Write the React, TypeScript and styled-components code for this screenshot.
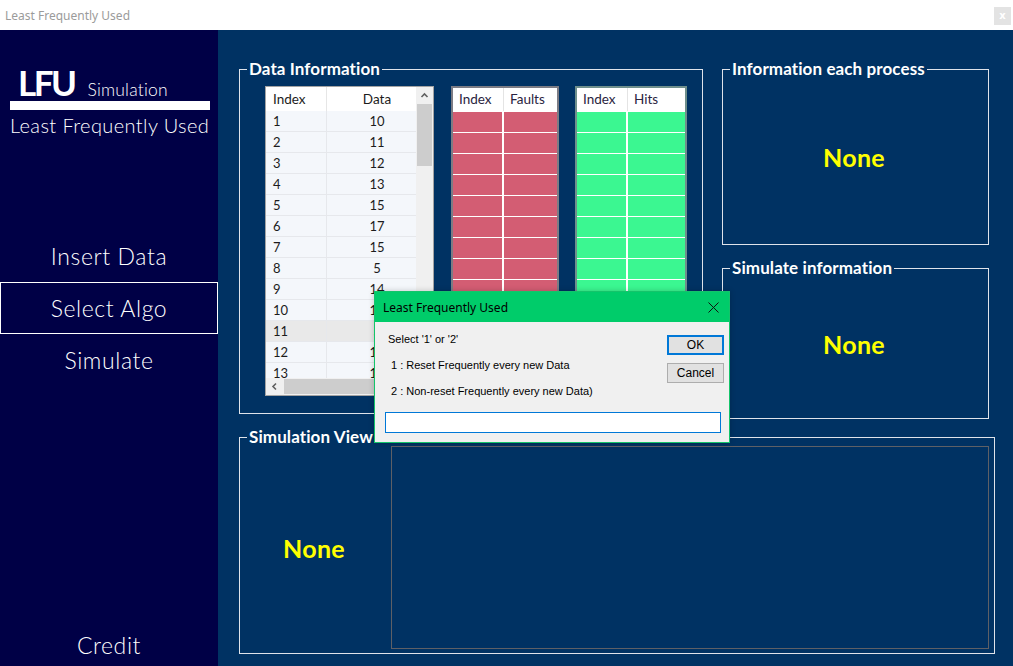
import React from 'react'
import styled, { createGlobalStyle } from 'styled-components'

const GlobalStyle = createGlobalStyle`
  html, body {
    margin: 0;
    padding: 0;
    overflow: hidden;
    background: #ffffff;
    font-family: Lato, "DejaVu Sans", sans-serif;
  }
  * { box-sizing: border-box; }
`

const MAIN_BG = '#003263'
const SIDE_BG = '#000046'

const dataRows = [10, 11, 12, 13, 15, 17, 15, 5, 14, 16, 5, 12, 10]

const Chevron = ({ dir }: { dir: 'up' | 'left' }) => (
  <svg width="9" height="9" viewBox="0 0 9 9">
    <path
      d={dir === 'up' ? 'M1.5 6 L4.5 3 L7.5 6' : 'M6 1.5 L3 4.5 L6 7.5'}
      fill="none"
      stroke="#606060"
      strokeWidth="1.6"
    />
  </svg>
)

const App = () => {
  return (
    <>
      <GlobalStyle />
      <Window>
        <TitleBar>
          <WindowTitle>Least Frequently Used</WindowTitle>
          <CloseBox>x</CloseBox>
        </TitleBar>
        <Body>
          <Sidebar>
            <LogoRow>
              <LogoMark>LFU</LogoMark>
              <LogoSmall>Simulation</LogoSmall>
            </LogoRow>
            <LogoBar />
            <LogoSubtitle>Least Frequently Used</LogoSubtitle>
            <Menu>
              <MenuItem>Insert Data</MenuItem>
              <MenuItem $active>Select Algo</MenuItem>
              <MenuItem>Simulate</MenuItem>
            </Menu>
            <CreditItem>Credit</CreditItem>
          </Sidebar>

          <Main>
            <TopRow>
              <Group $w={464} $h={345}>
                <Caption>Data Information</Caption>
                <Tables>
                  <DataGrid>
                    <GridView>
                      <HeaderRow>
                        <IndexCell>Index</IndexCell>
                        <ValueCell>Data</ValueCell>
                      </HeaderRow>
                      {dataRows.map((v, i) => (
                        <DataRow key={i} $selected={i === 10}>
                          <IndexCell>{i + 1}</IndexCell>
                          <ValueCell>{v}</ValueCell>
                        </DataRow>
                      ))}
                    </GridView>
                    <VScroll>
                      <ArrowBox><Chevron dir="up" /></ArrowBox>
                      <VThumb />
                    </VScroll>
                    <HScroll>
                      <ArrowBox><Chevron dir="left" /></ArrowBox>
                      <HThumb />
                    </HScroll>
                    <Corner />
                  </DataGrid>

                  <ColorGrid $w={108} $gap={17} $fill="#d35d73" $edge="#7c7c84" $first={52}>
                    <ColorHead>
                      <span>Index</span>
                      <span>Faults</span>
                    </ColorHead>
                    {Array.from({ length: 13 }).map((_, i) => (
                      <ColorRow key={i}>
                        <span />
                        <span />
                      </ColorRow>
                    ))}
                  </ColorGrid>

                  <ColorGrid $w={112} $gap={16} $fill="#3bf791" $edge="#6f8f8c" $first={52}>
                    <ColorHead>
                      <span>Index</span>
                      <span>Hits</span>
                    </ColorHead>
                    {Array.from({ length: 13 }).map((_, i) => (
                      <ColorRow key={i}>
                        <span />
                        <span />
                      </ColorRow>
                    ))}
                  </ColorGrid>
                </Tables>
              </Group>

              <RightColumn>
                <Group $w={267} $h={176} $center>
                  <Caption>Information each process</Caption>
                  <NoneLabel>None</NoneLabel>
                </Group>
                <Group $w={267} $h={151} $center>
                  <Caption>Simulate information</Caption>
                  <NoneLabel>None</NoneLabel>
                </Group>
              </RightColumn>
            </TopRow>

            <SimGroup>
              <Caption>Simulation View</Caption>
              <NonePane>
                <NoneLabel>None</NoneLabel>
              </NonePane>
              <SimCanvas />
            </SimGroup>
          </Main>
        </Body>

        <Dialog>
          <DialogTitle>
            <span>Least Frequently Used</span>
            <svg width="11" height="11" viewBox="0 0 11 11">
              <path d="M0.5 0.5 L10.5 10.5 M10.5 0.5 L0.5 10.5" stroke="#111" strokeWidth="1" />
            </svg>
          </DialogTitle>
          <DialogBody>
            <DialogMain>
              <Prompt>
                <PromptLine>Select '1' or '2'</PromptLine>
                <PromptLine $indent>1 : Reset Frequently every new Data</PromptLine>
                <PromptLine $indent>2 : Non-reset Frequently every new Data)</PromptLine>
              </Prompt>
              <Buttons>
                <DialogButton $primary>OK</DialogButton>
                <DialogButton>Cancel</DialogButton>
              </Buttons>
            </DialogMain>
            <DialogInput />
          </DialogBody>
        </Dialog>
      </Window>
    </>
  )
}

export default App

const Window = styled.div`
  position: relative;
  width: 1013px;
  height: 666px;
  display: flex;
  flex-direction: column;
  background: ${MAIN_BG};
`

const TitleBar = styled.div`
  height: 30px;
  background: #ffffff;
  display: flex;
  align-items: center;
  justify-content: space-between;
  padding: 0 2px 0 5px;
`

const WindowTitle = styled.span`
  font-family: "Noto Sans", "Open Sans", sans-serif;
  font-size: 12px;
  color: #9b9b9b;
`

const CloseBox = styled.div`
  width: 17px;
  height: 18px;
  margin-top: 2px;
  background: #e3e3e3;
  color: #ffffff;
  font-family: "DejaVu Sans", sans-serif;
  font-size: 10px;
  font-weight: bold;
  line-height: 17px;
  text-align: center;
`

const Body = styled.div`
  flex: 1;
  display: flex;
  min-height: 0;
`

const Sidebar = styled.nav`
  width: 218px;
  background: ${SIDE_BG};
  color: #ffffff;
  display: flex;
  flex-direction: column;
  padding-top: 34px;
`

const LogoRow = styled.div`
  display: flex;
  align-items: baseline;
  padding-left: 18px;
  height: 36px;
`

const LogoMark = styled.span`
  font-size: 35px;
  font-weight: 700;
  line-height: 36px;
  letter-spacing: -2.5px;
`

const LogoSmall = styled.span`
  font-size: 17.5px;
  font-weight: 300;
  margin-left: 13px;
  letter-spacing: 0.2px;
`

const LogoBar = styled.div`
  margin: 1px 0 0 10px;
  width: 200px;
  height: 9px;
  background: #ffffff;
`

const LogoSubtitle = styled.div`
  margin: 3px 0 0 10px;
  font-size: 20px;
  font-weight: 300;
  line-height: 24px;
  letter-spacing: 0.4px;
`

const Menu = styled.div`
  margin-top: 93px;
  display: flex;
  flex-direction: column;
`

const MenuItem = styled.div<{ $active?: boolean }>`
  height: 52px;
  display: flex;
  align-items: center;
  justify-content: center;
  padding-bottom: 1px;
  font-size: 23px;
  font-weight: 300;
  letter-spacing: 0.6px;
  border: 1px solid ${p => (p.$active ? '#ffffff' : 'transparent')};
`

const CreditItem = styled(MenuItem)`
  margin-top: auto;
  height: 42px;
`

const Main = styled.main`
  flex: 1;
  padding: 39px 0 0 21px;
  display: flex;
  flex-direction: column;
`

const TopRow = styled.div`
  display: flex;
  align-items: flex-start;
`

const RightColumn = styled.div`
  margin-left: 19px;
  display: flex;
  flex-direction: column;
  gap: 23px;
`

const Group = styled.section<{ $w: number; $h: number; $center?: boolean }>`
  position: relative;
  width: ${p => p.$w}px;
  height: ${p => p.$h}px;
  border: 1px solid #dfe3ea;
  display: flex;
  ${p => (p.$center ? 'align-items: center; justify-content: center; padding-right: 3px;' : '')}
`

const Caption = styled.h2`
  position: absolute;
  top: -12px;
  left: 7px;
  margin: 0;
  padding: 0 2px;
  background: ${MAIN_BG};
  color: #ffffff;
  font-size: 17px;
  font-weight: 700;
  line-height: 22px;
  letter-spacing: 0.1px;
  white-space: nowrap;
`

const NoneLabel = styled.div`
  color: #ffff00;
  font-size: 25px;
  font-weight: 700;
  letter-spacing: 0.3px;
`

const Tables = styled.div`
  display: flex;
  align-items: flex-start;
  padding: 16px 0 0 25px;
`

const DataGrid = styled.div`
  width: 169px;
  height: 310px;
  border: 1px solid #a3a3a3;
  background: #f0f0f0;
  display: grid;
  grid-template-columns: 150px 17px;
  grid-template-rows: 1fr 17px;
  overflow: hidden;
  font-size: 13px;
  color: #1c1c1c;
`

const GridView = styled.div`
  overflow: hidden;
  background: #f4f7fb;
`

const HeaderRow = styled.div`
  height: 24px;
  display: grid;
  grid-template-columns: 61px 100px;
  background: #ffffff;
  align-items: center;
  font-size: 13.5px;

  & > div {
    height: 100%;
    display: flex;
    align-items: center;
  }
  & > div:first-child {
    border-right: 1px solid #e6e6e6;
  }
`

const DataRow = styled.div<{ $selected?: boolean }>`
  height: 21px;
  display: grid;
  grid-template-columns: 61px 100px;
  align-items: center;
  background: ${p => (p.$selected ? '#e9e9e9' : '#f4f7fb')};
  border-bottom: 1px solid #e6e8ec;

  & > div:first-child {
    height: 100%;
    display: flex;
    align-items: center;
    border-right: 1px solid #e6e8ec;
  }
`

const IndexCell = styled.div`
  padding-left: 7px;
`

const ValueCell = styled.div`
  text-align: center;
  justify-content: center;
`

const VScroll = styled.div`
  background: #f0f0f0;
  display: flex;
  flex-direction: column;
  align-items: center;
`

const ArrowBox = styled.div`
  width: 17px;
  height: 17px;
  display: flex;
  align-items: center;
  justify-content: center;
  flex-shrink: 0;
`

const VThumb = styled.div`
  width: 15px;
  height: 62px;
  background: #cdcdcd;
`

const HScroll = styled.div`
  background: #f0f0f0;
  display: flex;
  align-items: center;
`

const HThumb = styled.div`
  width: 105px;
  height: 15px;
  margin-left: 1px;
  background: #cdcdcd;
`

const Corner = styled.div`
  background: #f0f0f0;
`

const ColorGrid = styled.div<{ $w: number; $gap: number; $fill: string; $edge: string; $first: number }>`
  width: ${p => p.$w}px;
  height: 310px;
  margin-left: ${p => p.$gap}px;
  border: 2px solid ${p => p.$edge};
  background: ${p => p.$fill};
  overflow: hidden;
  font-size: 13.5px;
  color: #2a2440;

  & > div {
    display: grid;
    grid-template-columns: ${p => p.$first - 1}px 1fr;
  }
`

const ColorHead = styled.div`
  height: 23px;
  background: #ffffff;

  & > span {
    display: flex;
    align-items: center;
    padding: 0 0 2px 6px;
  }
  & > span:first-child {
    border-right: 1px solid #e4e4e4;
  }
`

const ColorRow = styled.div`
  height: 21px;
  border-top: 1px solid #ffffff;

  & > span:first-child {
    border-right: 2px solid #ffffff;
  }
`

const SimGroup = styled.section`
  position: relative;
  margin-top: 18px;
  width: 756px;
  height: 217px;
  border: 1px solid #dfe3ea;
  display: flex;
  padding: 8px 5px 4px 0;
`

const NonePane = styled.div`
  width: 151px;
  display: flex;
  align-items: center;
  justify-content: center;
  padding-right: 3px;
`

const SimCanvas = styled.div`
  flex: 1;
  border: 1px solid #5e6066;
`

const Dialog = styled.div`
  position: absolute;
  left: 374px;
  top: 291px;
  width: 356px;
  height: 152px;
  border: 1px solid #14c46a;
  background: #f0f0f0;
  display: flex;
  flex-direction: column;
  font-family: "Liberation Sans", Arial, sans-serif;
  font-size: 11px;
  color: #000000;
  box-shadow: 0 0 6px rgba(0, 0, 0, 0.2);
`

const DialogTitle = styled.div`
  height: 30px;
  background: #00cc6a;
  display: flex;
  align-items: center;
  justify-content: space-between;
  padding: 0 10px 0 8px;
  font-family: "Noto Sans", "Open Sans", sans-serif;
  font-size: 12px;
  color: #000000;
`

const DialogBody = styled.div`
  flex: 1;
  display: flex;
  flex-direction: column;
`

const DialogMain = styled.div`
  display: flex;
  justify-content: space-between;
`

const Prompt = styled.div`
  padding: 11px 0 0 13px;
  display: flex;
  flex-direction: column;
  gap: 13px;
`

const PromptLine = styled.div<{ $indent?: boolean }>`
  line-height: 13px;
  padding-left: ${p => (p.$indent ? 3 : 0)}px;
  white-space: nowrap;
`

const Buttons = styled.div`
  padding: 13px 5px 0 0;
  display: flex;
  flex-direction: column;
  gap: 8px;
`

const DialogButton = styled.div<{ $primary?: boolean }>`
  width: 57px;
  height: 20px;
  background: #e1e1e1;
  border: ${p => (p.$primary ? '2px solid #0078d7' : '1px solid #adadad')};
  display: flex;
  align-items: center;
  justify-content: center;
  font-size: 12px;
`

const DialogInput = styled.div`
  margin: 14px 0 0 10px;
  width: 336px;
  height: 21px;
  background: #ffffff;
  border: 1px solid #0078d7;
`
